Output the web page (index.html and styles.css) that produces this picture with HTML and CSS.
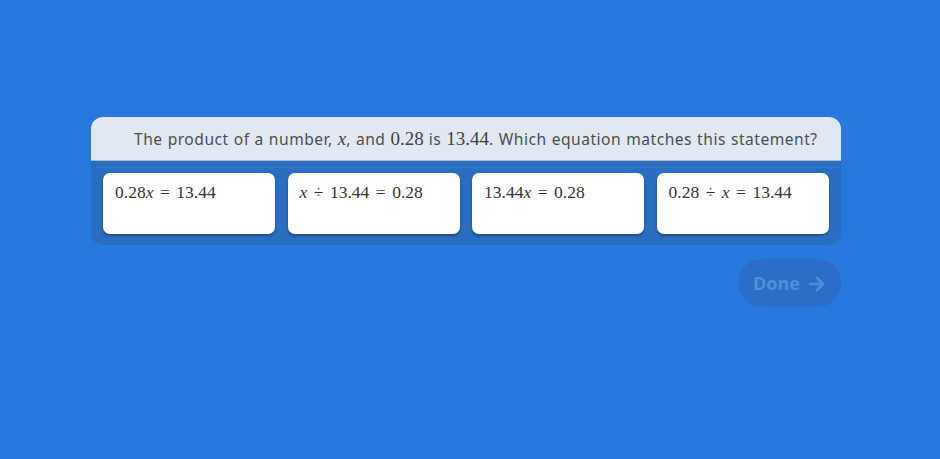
FILE: index.html
```html
<!DOCTYPE html>
<html>
<head>
<meta charset="utf-8">
<link rel="stylesheet" href="styles.css">
</head>
<body>
<main class="stage">
  <section class="question">
    <header class="prompt"><p class="prompt-text">The product of a number, <span class="m"><i>x</i></span>, and <span class="m">0.28</span> is <span class="m">13.44</span>. Which equation matches this statement?</p></header>
    <div class="choices">
      <button class="choice"><span class="m">0.28<i>x</i><span class="op">=</span>13.44</span></button>
      <button class="choice"><span class="m"><i>x</i><span class="op">÷</span>13.44<span class="op">=</span>0.28</span></button>
      <button class="choice"><span class="m">13.44<i>x</i><span class="op">=</span>0.28</span></button>
      <button class="choice"><span class="m">0.28<span class="op">÷</span><i>x</i><span class="op">=</span>13.44</span></button>
    </div>
  </section>
  <div class="actions">
    <button class="done">Done
      <svg width="18" height="16" viewBox="0 0 18 16"><path d="M2 8h13M9 2l6 6-6 6" fill="none" stroke="currentColor" stroke-width="2.6" stroke-linecap="round" stroke-linejoin="round"/></svg>
    </button>
  </div>
</main>
</body>
</html>
```
FILE: styles.css
```css
html, body { margin: 0; padding: 0; }
body {
  background: #277adb;
  width: 940px;
  height: 459px;
  overflow: hidden;
  font-family: "Noto Sans", "Open Sans", sans-serif;
}
.stage {
  padding: 117px 99px 0 91px;
  display: flex;
  flex-direction: column;
}
.question {
  width: 750px;
  border-radius: 12px;
  background: #2a6ec2;
  overflow: hidden;
}
.prompt {
  background: #e1e8f1;
  height: 44px;
  box-sizing: border-box;
  border-bottom: 1px solid #a9b6c6;
  padding: 0 0 0 43px;
  display: flex;
  align-items: center;
}
.prompt-text {
  margin: 0;
  font-size: 15.6px;
  color: #4a4f57;
  letter-spacing: 0.5px;
  word-spacing: 0.5px;
}
.m {
  font-family: "Liberation Serif", "DejaVu Serif", serif;
  font-size: 16.5px;
  color: #3d4148;
  letter-spacing: 0;
  word-spacing: 0;
}
.prompt .m { font-size: 19px; }
.m i { font-style: italic; }
.op { margin: 0 6.5px; }
.choices {
  display: flex;
  gap: 12.5px;
  padding: 12px 12px 11px 12px;
}
.choice {
  flex: 0 0 172px;
  height: 61px;
  background: #fff;
  border: none;
  border-radius: 7px;
  box-shadow: 0 2px 3px rgba(0, 0, 0, 0.3);
  display: flex;
  align-items: flex-start;
  padding: 9px 12px;
  box-sizing: border-box;
  font-family: inherit;
  cursor: pointer;
}
.choice .m { margin: 0; font-size: 17.5px; color: #333; }
.actions {
  display: flex;
  justify-content: flex-end;
  width: 750px;
  padding-top: 14px;
}
.done {
  width: 103px;
  height: 48px;
  border: none;
  border-radius: 24px;
  background: #2a6ec9;
  color: #4f8fd9;
  font-family: "Open Sans", "Noto Sans", sans-serif;
  font-weight: 700;
  font-size: 18px;
  display: flex;
  align-items: center;
  justify-content: center;
  gap: 8px;
  padding: 0;
}
.done svg { margin-top: 1px; }
```
